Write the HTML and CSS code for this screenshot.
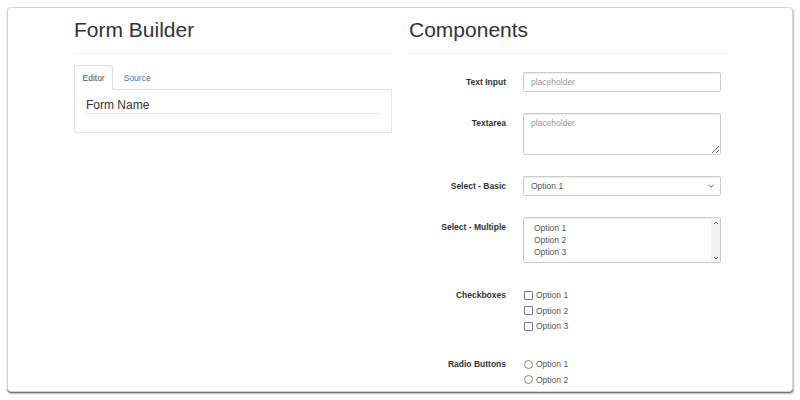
FILE: index.html
```html
<!DOCTYPE html>
<html lang="en">
<head>
<meta charset="utf-8">
<title>Form Builder</title>
<link rel="stylesheet" href="styles.css">
</head>
<body>
<div class="frame">
  <div class="container">
    <div class="col">
      <div class="page-header"><h1>Form Builder</h1></div>
      <ul class="tabs">
        <li class="tab active">Editor</li>
        <li class="tab link">Source</li>
      </ul>
      <div class="panel">
        <div class="legend">Form Name</div>
      </div>
    </div>
    <div class="col">
      <div class="page-header"><h1>Components</h1></div>
      <form class="form">
        <div class="group">
          <label class="label">Text Input</label>
          <div class="control"><input class="input" type="text" placeholder="placeholder"></div>
        </div>
        <div class="group">
          <label class="label">Textarea</label>
          <div class="control"><textarea class="input textarea" placeholder="placeholder"></textarea></div>
        </div>
        <div class="group">
          <label class="label">Select - Basic</label>
          <div class="control">
            <div class="input select">
              <span>Option 1</span>
              <svg class="chev" width="6" height="4" viewBox="0 0 6 4"><path d="M0.5 0.8 L3 3.2 L5.5 0.8" fill="none" stroke="#666" stroke-width="1"/></svg>
            </div>
          </div>
        </div>
        <div class="group">
          <label class="label">Select - Multiple</label>
          <div class="control">
            <div class="input multi">
              <div class="opts">
                <div class="opt">Option 1</div>
                <div class="opt">Option 2</div>
                <div class="opt">Option 3</div>
              </div>
              <div class="scrollbar">
                <svg width="8" height="8" viewBox="0 0 8 8"><path d="M2 5 L4 3 L6 5" fill="none" stroke="#777" stroke-width="1"/></svg>
                <div class="track"></div>
                <svg width="8" height="8" viewBox="0 0 8 8"><path d="M2 3 L4 5 L6 3" fill="none" stroke="#777" stroke-width="1"/></svg>
              </div>
            </div>
          </div>
        </div>
        <div class="group group-checks">
          <label class="label">Checkboxes</label>
          <div class="control checks">
            <div class="check"><span class="box"></span>Option 1</div>
            <div class="check"><span class="box"></span>Option 2</div>
            <div class="check"><span class="box"></span>Option 3</div>
          </div>
        </div>
        <div class="group">
          <label class="label">Radio Buttons</label>
          <div class="control checks">
            <div class="check"><span class="box round"></span>Option 1</div>
            <div class="check"><span class="box round"></span>Option 2</div>
            <div class="check"><span class="box round"></span>Option 3</div>
          </div>
        </div>
      </form>
    </div>
  </div>
</div>
</body>
</html>
```
FILE: styles.css
```css
* { box-sizing: border-box; }
html, body {
  margin: 0;
  padding: 0;
  background: #fff;
}
body {
  font-family: "Liberation Sans", Arial, sans-serif;
  color: #333;
  width: 800px;
  height: 400px;
  overflow: hidden;
}
.frame {
  margin: 7px 0 0 7px;
  width: 786px;
  height: 385px;
  border: 1px solid #d4d4d4;
  border-radius: 4px;
  background: #fff;
  box-shadow: 0 1px 1px rgba(0,0,0,0.45), 1px 2px 2px rgba(0,0,0,0.25);
  overflow: hidden;
}
.container {
  display: flex;
  gap: 17px;
  padding-left: 66px;
}
.col { width: 318px; flex: none; }
.col + .col { width: 319px; }
.page-header {
  padding: 10px 0 12px;
  border-bottom: 1px solid #eee;
}
h1 {
  margin: 0;
  font-size: 21px;
  line-height: 23px;
  font-weight: normal;
  color: #333;
}
.tabs {
  list-style: none;
  margin: 11px 0 0;
  padding: 0;
  display: flex;
  border-bottom: 1px solid #ddd;
}
.tab {
  font-size: 8.5px;
  line-height: 12px;
  padding: 5.5px 7.5px;
  border: 1px solid transparent;
  border-radius: 3px 3px 0 0;
  margin-bottom: -1px;
  margin-right: 2px;
}
.tab.active {
  color: #555;
  border-color: #ddd #ddd transparent;
  background: #fff;
}
.tab.link { color: #337ab7; }
.panel {
  border: 1px solid #e6e6e6;
  border-top: none;
  padding: 8px 11px 0 11px;
  height: 43px;
}
.legend {
  font-size: 12px;
  line-height: 14px;
  color: #333;
  border-bottom: 1px solid #e5e5e5;
  padding-bottom: 1px;
}
.form { margin-top: 18px; }
.group {
  display: flex;
  gap: 17px;
  margin-bottom: 21px;
}
.group-checks { padding-top: 1px; margin-bottom: 22px; }
.label {
  width: 97px;
  flex: none;
  text-align: right;
  font-size: 8.5px;
  font-weight: bold;
  line-height: 12px;
  padding-top: 4px;
  color: #333;
}
.control { width: 198px; flex: none; }
.input {
  display: block;
  width: 198px;
  height: 20px;
  border: 1px solid #ccc;
  border-radius: 2px;
  padding: 0 7px;
  font-family: "Liberation Sans", Arial, sans-serif;
  font-size: 8.5px;
  color: #555;
  background: #fff;
  box-shadow: inset 0 1px 1px rgba(0,0,0,0.075);
  outline: none;
}
.input::placeholder { color: #999; }
.textarea {
  height: 42px;
  padding: 3px 7px;
  line-height: 12px;
  resize: vertical;
}
.select {
  display: flex;
  align-items: center;
  justify-content: space-between;
  padding: 0 6px 0 7px;
  line-height: 12px;
}
.chev { display: block; }
.multi {
  height: 46px;
  display: flex;
  padding: 0;
}
.opts {
  flex: 1;
  padding: 4px 10px;
}
.opt {
  font-size: 8.5px;
  line-height: 12px;
  color: #555;
}
.scrollbar {
  width: 9px;
  display: flex;
  flex-direction: column;
  background: #f1f1f1;
}
.scrollbar svg { display: block; margin: 1px 0 0 0.5px; }
.scrollbar .track { flex: 1; }
.checks { padding-top: 4px; }
.check {
  display: flex;
  align-items: center;
  font-size: 8.5px;
  line-height: 12px;
  color: #555;
  height: 12px;
  margin-bottom: 3.5px;
}
.check:last-child { margin-bottom: 0; }
.box {
  width: 9px;
  height: 9px;
  border: 1px solid #777;
  border-radius: 1px;
  margin: 0 3px 0 1px;
  background: #fff;
}
.box.round { border-radius: 50%; border-color: #888; }
```
